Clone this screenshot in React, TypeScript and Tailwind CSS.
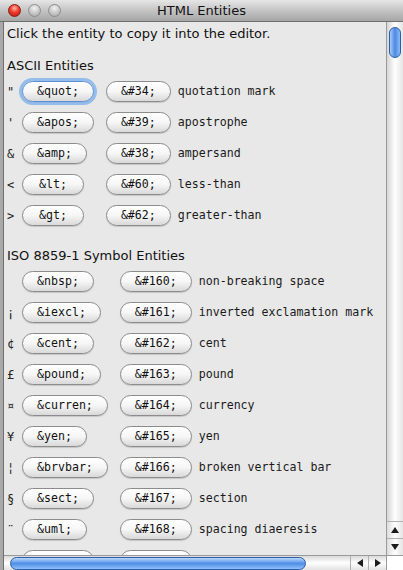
import React from 'react'

type Entity = [string, string, string, string]

const ascii: Entity[] = [
  ['"', '&quot;', '&#34;', 'quotation mark'],
  ["'", '&apos;', '&#39;', 'apostrophe'],
  ['&', '&amp;', '&#38;', 'ampersand'],
  ['<', '&lt;', '&#60;', 'less-than'],
  ['>', '&gt;', '&#62;', 'greater-than'],
]

const iso: Entity[] = [
  ['\u00a0', '&nbsp;', '&#160;', 'non-breaking space'],
  ['¡', '&iexcl;', '&#161;', 'inverted exclamation mark'],
  ['¢', '&cent;', '&#162;', 'cent'],
  ['£', '&pound;', '&#163;', 'pound'],
  ['¤', '&curren;', '&#164;', 'currency'],
  ['¥', '&yen;', '&#165;', 'yen'],
  ['¦', '&brvbar;', '&#166;', 'broken vertical bar'],
  ['§', '&sect;', '&#167;', 'section'],
  ['¨', '&uml;', '&#168;', 'spacing diaeresis'],
  ['©', '&copy;', '&#169;', 'copyright'],
]

const sans = 'font-["DejaVu_Sans","Liberation_Sans",sans-serif]'
const mono = 'font-["DejaVu_Sans_Mono","Liberation_Mono",monospace]'

function PillButton({ label, focused }: { label: string; focused?: boolean }) {
  return (
    <button
      className={`h-[21px] min-w-[62px] px-[14px] rounded-full border bg-gradient-to-b from-white via-[#f6f6f6] to-[#d9d9d9] text-[11.6px] leading-none text-[#111] shadow-[0_1px_1px_rgba(0,0,0,0.15)] font-["DejaVu_Sans_Mono","Liberation_Mono",monospace] ${
        focused
          ? 'border-[#5a8fd0] ring-[3px] ring-[#7fb0ea]/80'
          : 'border-[#8c8c8c]'
      }`}
    >
      {label}
    </button>
  )
}

function Section({ title, rows, focusFirst }: { title: string; rows: Entity[]; focusFirst?: boolean }) {
  return (
    <div>
      <div className={`${sans} text-[13px] leading-[16px] text-[#111]`}>{title}</div>
      <div className="mt-[7px] grid grid-cols-[15px_max-content_max-content_max-content] gap-y-[10px] items-center">
        {rows.map(([ch, named, num, desc], i) => (
          <React.Fragment key={named}>
            <span className={`${mono} text-[12px] text-[#222] leading-none`}>{ch}</span>
            <div className="flex">
              <PillButton label={named} focused={focusFirst && i === 0} />
            </div>
            <div className="flex ml-[12px]">
              <PillButton label={num} />
            </div>
            <span className={`${mono} ml-[7px] text-[11.6px] text-[#1a1a1a] whitespace-nowrap`}>{desc}</span>
          </React.Fragment>
        ))}
      </div>
    </div>
  )
}

function Light({ red }: { red?: boolean }) {
  return (
    <div
      className={`w-[13px] h-[13px] rounded-full border ${
        red
          ? 'border-[#8a1a12] bg-[radial-gradient(circle_at_50%_30%,#ffb3a8_0%,#ef3b2b_45%,#b4160c_100%)]'
          : 'border-[#8e8e8e] bg-[radial-gradient(circle_at_50%_30%,#f2f2f2_0%,#c6c6c6_55%,#a4a4a4_100%)]'
      }`}
    />
  )
}

// small black scroll arrow, rotated per direction
function Arrow({ dir }: { dir: 'up' | 'down' | 'left' | 'right' }) {
  const pts = {
    up: '4,1 8,7 0,7',
    down: '0,1 8,1 4,7',
    left: '1,4 7,0 7,8',
    right: '1,0 7,4 1,8',
  }[dir]
  return (
    <svg width="8" height="8" viewBox="0 0 8 8">
      <polygon points={pts} fill="#1c1c1c" />
    </svg>
  )
}

export default function App() {
  return (
    <div className="w-[403px] h-[570px] flex flex-col overflow-hidden bg-[#e8e8e8]">
      {/* title bar */}
      <div className="relative h-[22px] shrink-0 flex items-center bg-gradient-to-b from-[#e6e6e6] via-[#c4c4c4] to-[#a6a6a6] border-b border-[#6e6e6e]">
        <div className="flex gap-[7px] pl-[8px]">
          <Light red />
          <Light />
          <Light />
        </div>
        <div className={`absolute inset-0 flex items-center justify-center ${sans} text-[13px] text-[#111]`}>
          HTML Entities
        </div>
      </div>

      <div className="flex-1 flex min-h-0">
        <div className="w-[4px] shrink-0 bg-[#a9a9a9] border-r border-[#6f6f6f]" />

        <div className="flex-1 min-w-0 flex flex-col">
          {/* scrollable list */}
          <div className="flex-1 min-h-0 overflow-hidden pl-[3px] pt-[4px]">
            <div className={`${sans} text-[13px] leading-[16px] text-[#111] whitespace-nowrap`}>
              Click the entity to copy it into the editor.
            </div>
            <div className="mt-[16px]">
              <Section title="ASCII Entities" rows={ascii} focusFirst />
            </div>
            <div className="mt-[22px]">
              <Section title="ISO 8859-1 Symbol Entities" rows={iso} />
            </div>
          </div>

          {/* horizontal scroller */}
          <div className="h-[15px] shrink-0 flex border-t border-[#9a9a9a] bg-gradient-to-b from-[#dadada] via-white to-[#e2e2e2]">
            <div className="flex-1 flex items-center pl-[6px] pr-[40px]">
              <div className="h-[13px] w-[296px] rounded-full border border-[#2d5fa8] bg-gradient-to-b from-[#bcd8fb] via-[#4f8fe6] to-[#8fc0fa]" />
            </div>
            <div className="w-[18px] flex items-center justify-center border-l border-[#b0b0b0]">
              <Arrow dir="left" />
            </div>
            <div className="w-[18px] flex items-center justify-center border-l border-[#b0b0b0]">
              <Arrow dir="right" />
            </div>
          </div>
        </div>

        {/* vertical scroller */}
        <div className="w-[17px] shrink-0 flex flex-col border-l border-[#9a9a9a]">
          <div className="flex-1 bg-gradient-to-r from-[#d6d6d6] via-white to-[#e4e4e4] pt-[5px] px-[2px]">
            <div className="h-[31px] rounded-full border border-[#2d5fa8] bg-gradient-to-r from-[#a9cbf7] via-[#4b89e2] to-[#8dbcf7]" />
          </div>
          <div className="h-[17px] flex items-center justify-center border-t border-[#b0b0b0] bg-gradient-to-r from-[#dcdcdc] via-white to-[#e4e4e4]">
            <Arrow dir="up" />
          </div>
          <div className="h-[17px] flex items-center justify-center border-t border-[#b0b0b0] bg-gradient-to-r from-[#dcdcdc] via-white to-[#e4e4e4]">
            <Arrow dir="down" />
          </div>
          <div className="h-[15px] shrink-0 bg-white border-t border-[#9a9a9a]" />
        </div>
      </div>
    </div>
  )
}
